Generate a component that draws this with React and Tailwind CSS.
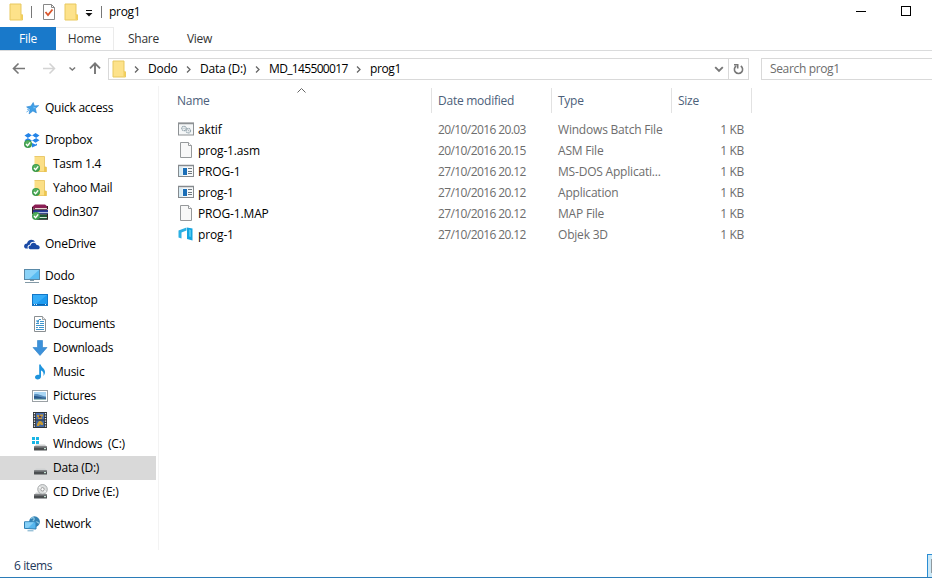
function FolderIcon() {
  return (
    <svg width="16" height="18" viewBox="0 0 16 18" className="shrink-0">
      <path d="M2 1h11v11h1.5v5H2z" fill="#fbe08a" stroke="#e9c95f" />
      <path d="M3 2h9v14H3z" fill="#fde28a" />
      <path d="M12.500 12l2-1v5.500h-2z" fill="#f3cf5c" />
    </svg>
  )
}

function SyncBadge() {
  return (
    <g>
      <circle cx="4" cy="12" r="4" fill="#3c9b4d" />
      <circle cx="4" cy="11.500" r="2.800" fill="#6cc46b" opacity=".5" />
      <path d="M2 12l1.600 1.700L6.200 10.400" fill="none" stroke="#fff" strokeWidth="1.300" />
    </g>
  )
}

function Drive() {
  return (
    <g>
      <path d="M4 8.500h9l2 2.500H2z" fill="#cfd1d2" />
      <rect x="2" y="10.500" width="13" height="4" rx=".5" fill="#4b4e50" />
      <rect x="2" y="10.500" width="13" height="1.200" fill="#7a7d7f" />
      <rect x="12" y="12" width="2" height="1.200" fill="#c4e2d2" />
    </g>
  )
}

const icons = {
  star: (
    <>
      <path d="M9.200 2.500l1.200 3.400 4.300-.3-3.300 3 1 4.300-3.500-2-3.800 3 .9-4.600-3.400-2.400 4.300-.8z" fill="#3f9fe6" stroke="#2f87d4" strokeWidth=".6" />
      <path d="M2.500 12l3-2M3 9.200l2 .2" stroke="#6cb4ec" />
      <path d="M8.900 4.500l.8 2.500 2.500.1-2.400 1.600" fill="#7cc4f7" />
    </>
  ),
  dropbox: (
    <>
      <path d="M4.500 1L8 3.400 4 5.900.5 3.500zM11.500 1L15.500 3.500 12 5.900 8 3.400zM.5 8.300L4 5.900l4 2.400-3.500 2.500zM12 5.900l3.500 2.400-4 2.500L8 8.300zM8 11l3.500 1.500 1.500-1v1.700L8 15.500z" fill="#2384e8" />
      <path d="M4 5.900l4-2.500 4 2.500-4 2.400z" fill="#fff" />
      <SyncBadge />
    </>
  ),
  syncFolder: (
    <>
      <path d="M2.500.500h10v11h2v4.500h-12z" fill="#fbdf86" />
      <path d="M12 11h2.500v5H12z" fill="#efc850" />
      <path d="M2.500.500h10V11h1.700v4.700H3" fill="none" stroke="#e4bf57" strokeWidth=".8" />
      <SyncBadge />
    </>
  ),
  winrar: (
    <>
      <path d="M0 3l3-2.500h10L16 3v2.500H2z" fill="#8b1e54" />
      <path d="M3 4.500h12" stroke="#e9d9d3" />
      <path d="M0 6h16v4H2z" fill="#273a9b" />
      <path d="M3 8.700h13" stroke="#d5dbef" />
      <path d="M1 10.500h15V15H3z" fill="#1f5a38" />
      <path d="M7 13.500h9" stroke="#d4e8d4" />
      <path d="M.5 3v7M15.500 2v3M15.500 10v5" stroke="#34211d" strokeWidth="1.200" fill="none" />
      <path d="M0 5.800h15M2 10.200h14M5 15.500h11" stroke="#222" strokeWidth=".8" />
      <SyncBadge />
    </>
  ),
  onedrive: (
    <>
      <path d="M1.500 12.500C-1 11 0 7.600 3 7.500 3.500 3.500 9.300 2 11 6c-3-.8-4.800.6-5.200 2.800C3.700 9 3 11 4 12.500z" fill="#1b4ba6" />
      <path d="M6.300 13.300c-2.500-.5-2.300-3.800.2-3.900C7 6.300 11.500 5.900 12.600 9c3.500-.3 4.400 4.100.9 4.300z" fill="#1b4ba6" />
    </>
  ),
  computer: (
    <>
      <rect x=".5" y="1.500" width="15" height="10" fill="#5bbcf1" stroke="#5a8aa8" />
      <path d="M1 2h14L5 11H1z" fill="#8bd3f8" />
      <path d="M6 12.500h4M1 14.500h14" stroke="#8299a6" />
    </>
  ),
  desktop: (
    <>
      <rect x=".5" y="2.500" width="15" height="11" fill="#1d9bf0" stroke="#1277c8" />
      <path d="M1 3h14L4 12H1z" fill="#36adf8" />
      <path d="M1 12.500h14" stroke="#0d65b0" />
      <path d="M2 12.500h1M4 12.500h1M13 12.500h1" stroke="#d8eefc" />
    </>
  ),
  documents: (
    <>
      <path d="M2.500.500h8l3 3v12h-11z" fill="#fff" stroke="#8a8f92" />
      <path d="M10.500.500v3h3" fill="#eee" stroke="#8a8f92" strokeWidth=".8" />
      <path d="M4 5h2M7 3.500h2M8 5.500h4M4 7.500h3M8 7.500h4M4 9.500h8M4 11.500h2M7 11.500h5M4 13.500h8" stroke="#3f95cc" />
      <path d="M5 5l2-1.500v3H5z" fill="#3f95cc" />
    </>
  ),
  downloads: (
    <path d="M5.500.500h5v7h4.500L8 15.500 1 7.500h4.500z" fill="#3c91da" stroke="#2c7fc8" strokeWidth=".6" />
  ),
  music: (
    <path d="M7.200.500h1.500c.3 2.800 4.300 3.800 4.300 7.500 0 1.800-.7 3-1.700 4 .9-3-.4-4.800-2.300-5.500v6c0 3.500-6 4-6 .8 0-2.300 2.500-3.200 4.200-2.300z" fill="#1e94dd" />
  ),
  pictures: (
    <>
      <rect x=".5" y="2.500" width="15" height="11" fill="#fff" stroke="#9ba1a5" />
      <rect x="2" y="4" width="12" height="8" fill="#a9d6f4" />
      <path d="M2 6.500c4-1.500 5 1 12 2V12H2z" fill="#5b8fbd" />
      <path d="M2 8c3-.5 6 1.500 12 1.800V11H2z" fill="#27598a" />
      <path d="M2 10.800h12V12H2z" fill="#9cc3c0" />
    </>
  ),
  videos: (
    <>
      <rect x="1" y="0" width="14" height="16" fill="#30353a" />
      <path d="M2.500 1v14M13.500 1v14" stroke="#eef1f3" strokeWidth="1.300" strokeDasharray="1.300 1.200" />
      <rect x="4" y="1" width="8" height="6.500" fill="#4a6fae" />
      <rect x="4" y="8.500" width="8" height="6.500" fill="#3d64a0" />
      <path d="M5 3h2v2H5zM8 2.500h3v2H8zM6 5.500h4v1.500H6z" fill="#c79a34" />
      <path d="M5 12l2-3h2l2 2v2H9l-1-1-1 2H5z" fill="#c79a34" />
      <circle cx="8" cy="4.800" r="1" fill="#6d2e3b" />
    </>
  ),
  windows: (
    <>
      <Drive />
      <path d="M0 1h3v3H0zM4 1h3v3H4zM0 5h3v3H0zM4 5h3v3H4z" fill="#19b5e5" />
    </>
  ),
  drive: <Drive />,
  cd: (
    <>
      <Drive />
      <circle cx="10.500" cy="5.300" r="4.800" fill="#dcdede" stroke="#9b9ea0" strokeWidth=".8" />
      <circle cx="10.500" cy="5.300" r="1.700" fill="#fff" stroke="#888" strokeWidth=".8" />
      <path d="M7 3l2 1.300M12 6.700l2 1.500" stroke="#fff" />
    </>
  ),
  network: (
    <>
      <circle cx="10.500" cy="5.700" r="5.400" fill="#3482b4" />
      <path d="M7 2.500c3-2 4 .5 2.500 2s1 2 2.500 1.500 2 1 3 1" fill="none" stroke="#8cc8e4" strokeWidth="1.300" />
      <path d="M.5 5.800h11.500v7.200L.5 12.400z" fill="#56b6ee" stroke="#2f7fb3" />
      <path d="M1 6.300h9L4 12l-3-.2z" fill="#86cff6" />
      <path d="M3.500 14.800h6" stroke="#6fa9c8" />
    </>
  ),
  batch: (
    <>
      <rect x=".5" y="2" width="15" height="12" fill="#f5f7f8" stroke="#8d9194" />
      <path d="M0 2.500h16" stroke="#8d9194" strokeWidth="1.500" />
      <circle cx="6" cy="7.500" r="2.200" fill="none" stroke="#98a8b0" strokeWidth="1.300" strokeDasharray="1.400 .5" />
      <circle cx="10.300" cy="9.700" r="2.200" fill="none" stroke="#98a8b0" strokeWidth="1.300" strokeDasharray="1.400 .5" />
      <circle cx="6" cy="7.500" r=".6" fill="#98a8b0" />
      <circle cx="10.300" cy="9.700" r=".6" fill="#98a8b0" />
    </>
  ),
  file: (
    <>
      <path d="M2.500.500h8l3 3v12h-11z" fill="#f8f8f8" stroke="#96999b" />
      <path d="M10.500.500v3h3" fill="#fff" stroke="#96999b" />
    </>
  ),
  app: (
    <>
      <rect x=".5" y="2.500" width="15" height="11" fill="#f7f9fa" stroke="#858a8e" />
      <path d="M0 2.500h16" stroke="#858a8e" strokeWidth="1.500" />
      <rect x="1" y="4" width="3.500" height="9" fill="#d8ecf5" />
      <rect x="5" y="5" width="4" height="7" fill="#1b6fb8" />
      <path d="M10 5.500h4M10 8.500h4M10 10.500h4" stroke="#70797f" />
    </>
  ),
  object3d: (
    <>
      <path d="M.5 4.500L8.500 1.500v3L3.500 6.500v6l-3-1z" fill="#2cb0e3" />
      <path d="M9 1.500l5.500 1v12l-5.500-1.500z" fill="#14a5e0" />
      <path d="M11 3.500l2 .4v7l-2-.5" fill="#4cc8f1" />
    </>
  ),
}

function Icon({ name, className = '' }) {
  return (
    <svg width="16" height="16" viewBox="0 0 16 16" className={`shrink-0 ${className}`}>
      {icons[name]}
    </svg>
  )
}

const groups = [
  [{ icon: 'star', label: 'Quick access' }],
  [
    { icon: 'dropbox', label: 'Dropbox' },
    { icon: 'syncFolder', label: 'Tasm 1.4', child: true },
    { icon: 'syncFolder', label: 'Yahoo Mail', child: true },
    { icon: 'winrar', label: 'Odin307', child: true },
  ],
  [{ icon: 'onedrive', label: 'OneDrive' }],
  [
    { icon: 'computer', label: 'Dodo' },
    { icon: 'desktop', label: 'Desktop', child: true },
    { icon: 'documents', label: 'Documents', child: true },
    { icon: 'downloads', label: 'Downloads', child: true },
    { icon: 'music', label: 'Music', child: true },
    { icon: 'pictures', label: 'Pictures', child: true },
    { icon: 'videos', label: 'Videos', child: true },
    { icon: 'windows', label: 'Windows  (C:)', child: true },
    { icon: 'drive', label: 'Data (D:)', child: true, selected: true },
    { icon: 'cd', label: 'CD Drive (E:)', child: true },
  ],
  [{ icon: 'network', label: 'Network' }],
]

const files = [
  { icon: 'batch', name: 'aktif', date: '20/10/2016 20.03', type: 'Windows Batch File' },
  { icon: 'file', name: 'prog-1.asm', date: '20/10/2016 20.15', type: 'ASM File' },
  { icon: 'app', name: 'PROG-1', date: '27/10/2016 20.12', type: 'MS-DOS Applicati...' },
  { icon: 'app', name: 'prog-1', date: '27/10/2016 20.12', type: 'Application' },
  { icon: 'file', name: 'PROG-1.MAP', date: '27/10/2016 20.12', type: 'MAP File' },
  { icon: 'object3d', name: 'prog-1', date: '27/10/2016 20.12', type: 'Objek 3D' },
]

function TitleBar() {
  return (
    <div className="flex h-[27px] shrink-0 items-start pl-2">
      <div className="mt-[3px] flex h-[18px] items-center">
        <FolderIcon />
        <div className="ml-[7px] h-3 w-px bg-[#777]" />
        <svg width="14" height="16" viewBox="0 0 14 16" className="ml-[10px]">
          <path d="M1.500.500h8l3 3v12h-11z" fill="#fff" stroke="#888" />
          <path d="M9.500.500v3h3" fill="none" stroke="#888" />
          <path d="M3.500 8l2.500 3 4.500-5.500" fill="none" stroke="#d9552b" strokeWidth="1.800" />
        </svg>
        <div className="ml-[7px]"><FolderIcon /></div>
        <svg width="8" height="7" viewBox="0 0 8 7" className="ml-[6px] mt-[3px]">
          <path d="M1 .5h6" stroke="#111" />
          <path d="M.5 3h7L4 6.500z" fill="#111" />
        </svg>
        <div className="ml-[8px] h-3 w-px bg-[#777]" />
        <span className="ml-[7px] tracking-[-0.3px]">prog1</span>
      </div>
      <svg width="10" height="10" viewBox="0 0 10 10" className="ml-auto mt-[6px]">
        <path d="M0 5.500h10" stroke="#000" />
      </svg>
      <svg width="10" height="10" viewBox="0 0 10 10" className="ml-[35px] mr-[21px] mt-[6px]">
        <rect x=".5" y=".5" width="9" height="9" fill="none" stroke="#000" />
      </svg>
    </div>
  )
}

function Crumb({ children, className = '' }) {
  return (
    <div className={`flex items-center ${className}`}>
      <svg width="5" height="7" viewBox="0 0 5 7" className="mr-[9px] shrink-0">
        <path d="M1 .5l3 3-3 3" fill="none" stroke="#666" strokeWidth="1.300" />
      </svg>
      <span className="whitespace-nowrap">{children}</span>
    </div>
  )
}

function AddressBar() {
  return (
    <div className="flex h-[35px] shrink-0 items-start overflow-hidden pt-[7px]">
      <div className="flex h-[22px] w-[108px] shrink-0 items-center">
        <svg width="108" height="22" viewBox="0 0 108 22" fill="none">
          <path d="M25 10.500H14M18.500 5.500l-5 5 5 5" stroke="#777" strokeWidth="1.600" />
          <path d="M43 10.500h11M49.500 5.500l5 5-5 5" stroke="#d3d3d3" strokeWidth="1.500" />
          <path d="M69.500 9.500l2.800 2.600 2.800-2.600" stroke="#777" strokeWidth="1.400" />
          <path d="M95 16V5.500M90 10.300l5-5 5 5" stroke="#777" strokeWidth="1.900" />
        </svg>
      </div>
      <div className="flex h-[22px] w-[641px] shrink-0 items-center border border-[#d9d9d9] pl-[2px]">
        <FolderIcon />
        <Crumb className="ml-[7px] w-[52px]">Dodo</Crumb>
        <Crumb className="w-[69px]">Data (D:)</Crumb>
        <Crumb className="w-[101px] tracking-[-0.65px]">MD_145500017</Crumb>
        <Crumb className="tracking-[-0.4px]">prog1</Crumb>
        <svg width="10" height="7" viewBox="0 0 10 7" className="ml-auto mr-[4px]">
          <path d="M1.200 1.200L5 5l3.800-3.800" fill="none" stroke="#777" strokeWidth="1.900" />
        </svg>
        <div className="flex h-full w-5 items-center justify-center border-l border-[#d9d9d9]">
          <svg width="11" height="12" viewBox="0 0 11 12" fill="none" stroke="#777" strokeWidth="1.600">
            <path d="M7.800 3a4.100 4.100 0 1 1-4.600 0" />
            <path d="M1 1.700h3.700v3.800" />
          </svg>
        </div>
      </div>
      <div className="ml-3 flex h-[22px] flex-1 items-center border border-r-0 border-[#d9d9d9] pl-2 tracking-[-0.35px] text-[#6d6d6d]">
        Search prog1
      </div>
    </div>
  )
}

function Sidebar() {
  return (
    <div className="flex w-[159px] shrink-0 flex-col gap-2 border-r border-[#f3f3f3] pt-[10px]">
      {groups.map((group, i) => (
        <div key={i}>
          {group.map(item => (
            <div
              key={item.label}
              className={`flex h-6 w-[156px] items-center gap-[5px] whitespace-pre ${item.child ? 'pl-8' : 'pl-6'} ${item.selected ? 'bg-[#d9d9d9]' : ''}`}
            >
              <Icon name={item.icon} />
              <span>{item.label}</span>
            </div>
          ))}
        </div>
      ))}
    </div>
  )
}

function FileList() {
  return (
    <div className="flex-1 pl-[18px]">
      <div className="relative mt-[2px] flex h-[25px] items-center text-[#4c607a]">
        <svg width="9" height="5" viewBox="0 0 9 5" className="absolute left-[120px] top-0">
          <path d="M.5 4.500l4-4 4 4" fill="none" stroke="#666" />
        </svg>
        <div className="w-[254px]">Name</div>
        <div className="flex h-full w-[120px] items-center border-l border-[#e2e2e2] pl-[6px]">Date modified</div>
        <div className="flex h-full w-[120px] items-center border-l border-[#e2e2e2] pl-[6px]">Type</div>
        <div className="flex h-full w-[81px] items-center border-x border-[#e2e2e2] pl-[6px]">Size</div>
      </div>
      <div className="pt-[6px]">
        {files.map((file, i) => (
          <div key={i} className="flex h-[21px] items-center text-[#6d6d6d]">
            <div className="flex w-[261px] items-center gap-[4px] pl-px tracking-[-0.15px] text-black">
              <Icon name={file.icon} className="mb-[2px]" />
              <span>{file.name}</span>
            </div>
            <div className="w-[120px] whitespace-nowrap tracking-[-0.6px]">{file.date}</div>
            <div className="w-[120px] whitespace-nowrap tracking-[-0.2px]">{file.type}</div>
            <div className="w-[66px] text-right tracking-[-0.35px]">1 KB</div>
          </div>
        ))}
      </div>
    </div>
  )
}

export default function App() {
  return (
    <div className="flex h-[578px] w-[932px] flex-col overflow-hidden bg-white font-['Open_Sans',sans-serif] text-[12px] leading-4 tracking-[-0.25px] text-black">
      <TitleBar />
      <div className="flex h-6 shrink-0 items-stretch border-b border-[#dadbdc] text-[#333]">
        <div className="flex w-14 items-center justify-center bg-[#1979ca] text-white">File</div>
        <div className="flex w-[58px] items-center justify-center border-r border-t border-[#ebebeb] tracking-[-0.1px]">Home</div>
        <div className="flex w-[59px] items-center justify-center">Share</div>
        <div className="flex w-[53px] items-center justify-center">View</div>
      </div>
      <AddressBar />
      <div className="flex h-[464px] shrink-0">
        <Sidebar />
        <FileList />
      </div>
      <div className="flex flex-1 border-b border-[#2b7cb8] text-[#1e395b]">
        <div className="flex items-center pb-px pl-[14px] pt-[6px] tracking-[-0.4px]">6 items</div>
        <div className="ml-auto mt-[4px] w-[5px] border-l border-t border-[#2a8dd4] bg-[#cce8f6] pl-[3px] pt-1">
          <div className="h-[14px] bg-[#8f999f]" />
        </div>
      </div>
    </div>
  )
}
